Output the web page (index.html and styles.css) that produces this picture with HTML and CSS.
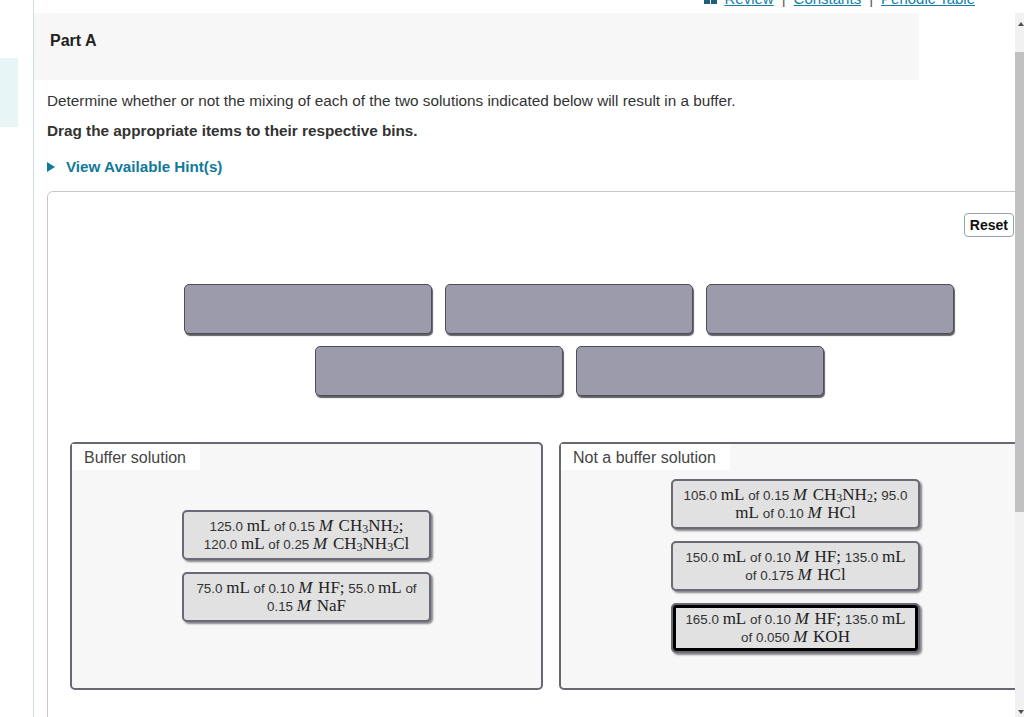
FILE: index.html
```html
<!DOCTYPE html>
<html>
<head>
<meta charset="utf-8">
<link rel="stylesheet" href="styles.css">
</head>
<body>
<div class="page">
  <div class="side"><div class="side-tab"></div></div>
  <div class="main">
    <div class="toplinks">
      <div class="links">
        <svg class="book" width="13" height="12" viewBox="0 0 13 12"><rect x="0" y="1" width="6" height="10" fill="#1f5f78"/><rect x="7" y="1" width="6" height="10" fill="#1f5f78"/></svg>
        <a class="lnk">Review</a><span class="sep">|</span><a class="lnk">Constants</a><span class="sep">|</span><a class="lnk">Periodic Table</a>
      </div>
    </div>
    <div class="part-head">Part A</div>
    <div class="content">
      <p class="intro">Determine whether or not the mixing of each of the two solutions indicated below will result in a buffer.</p>
      <p class="instr">Drag the appropriate items to their respective bins.</p>
      <div class="hint"><span class="tri"></span>View Available Hint(s)</div>
      <div class="area">
        <div class="toolbar"><button class="reset">Reset</button></div>
        <div class="slots">
          <div class="slot"></div><div class="slot"></div><div class="slot"></div>
          <div class="slot"></div><div class="slot"></div>
        </div>
        <div class="bins">
          <div class="bin">
            <div class="bin-label">Buffer solution</div>
            <div class="item">125.0 <span class="m">mL</span> of 0.15 <i class="m mi">M</i> <span class="m">CH<sub>3</sub>NH<sub>2</sub>;</span><br>120.0 <span class="m">mL</span> of 0.25 <i class="m mi">M</i> <span class="m">CH<sub>3</sub>NH<sub>3</sub>Cl</span></div>
            <div class="item">75.0 <span class="m">mL</span> of 0.10 <i class="m mi">M</i> <span class="m">HF;</span> 55.0 <span class="m">mL</span> of<br>0.15 <i class="m mi">M</i> <span class="m">NaF</span></div>
          </div>
          <div class="bin">
            <div class="bin-label">Not a buffer solution</div>
            <div class="item">105.0 <span class="m">mL</span> of 0.15 <i class="m mi">M</i> <span class="m">CH<sub>3</sub>NH<sub>2</sub>;</span> 95.0<br><span class="m">mL</span> of 0.10 <i class="m mi">M</i> <span class="m">HCl</span></div>
            <div class="item">150.0 <span class="m">mL</span> of 0.10 <i class="m mi">M</i> <span class="m">HF;</span> 135.0 <span class="m">mL</span><br>of 0.175 <i class="m mi">M</i> <span class="m">HCl</span></div>
            <div class="item focused">165.0 <span class="m">mL</span> of 0.10 <i class="m mi">M</i> <span class="m">HF;</span> 135.0 <span class="m">mL</span><br>of 0.050 <i class="m mi">M</i> <span class="m">KOH</span></div>
          </div>
        </div>
      </div>
    </div>
  </div>
</div>
<div class="scrollbar">
  <div class="arrow up"></div>
  <div class="thumb"></div>
  <div class="arrow down"></div>
</div>
</body>
</html>
```

FILE: styles.css
```css
html, body {
  margin: 0;
  padding: 0;
  height: 717px;
  overflow: hidden;
  background: #fff;
}
body {
  font-family: "Liberation Sans", Arial, sans-serif;
  color: #333;
  position: relative;
}
.page {
  display: flex;
  height: 717px;
}
.side {
  width: 33px;
  flex: none;
  border-right: 1px solid #cfdbe2;
  padding-top: 58px;
  box-sizing: content-box;
}
.side-tab {
  width: 18px;
  height: 69px;
  background: #e7f5f7;
}
.main {
  flex: 1;
  min-width: 0;
  overflow: hidden;
}
.toplinks {
  height: 13px;
  overflow: hidden;
  display: flex;
  justify-content: flex-end;
  padding-right: 49px;
}
.links {
  margin-top: -10px;
  display: flex;
  align-items: center;
  font-size: 15px;
  line-height: 17px;
  height: 17px;
}
.book {
  margin-right: 8px;
}
.lnk {
  color: #147fa6;
  text-decoration: underline;
}
.sep {
  color: #555;
  margin: 0 8px;
}
.part-head {
  width: 885px;
  height: 67px;
  box-sizing: border-box;
  background: #f7f7f7;
  padding: 19px 16px 0;
  font-weight: bold;
  font-size: 16px;
  line-height: 18px;
  color: #222;
}
.content {
  padding-left: 13px;
}
.intro {
  margin: 12px 0 0;
  font-size: 15.3px;
  line-height: 18px;
}
.instr {
  margin: 12px 0 0;
  font-size: 15.3px;
  line-height: 18px;
  font-weight: bold;
}
.hint {
  margin-top: 18px;
  display: flex;
  align-items: center;
  font-size: 15.2px;
  line-height: 18px;
  font-weight: bold;
  color: #0f7a9b;
}
.tri {
  width: 0;
  height: 0;
  border-top: 5.5px solid transparent;
  border-bottom: 5.5px solid transparent;
  border-left: 8px solid #0f7a9b;
  margin-right: 11px;
}
.area {
  margin-top: 15px;
  width: 1010px;
  border: 1px solid #c6c6c6;
  border-radius: 6px;
  padding: 21px 24px 40px 22px;
  box-sizing: border-box;
}
.toolbar {
  display: flex;
  justify-content: flex-end;
  margin-right: 18px;
}
.reset {
  height: 24px;
  padding: 0 5px;
  background: #fff;
  border: 1px solid #93a5aa;
  border-radius: 4px;
  font-family: "Liberation Sans", Arial, sans-serif;
  font-size: 14px;
  font-weight: bold;
  color: #111;
}
.slots {
  margin: 47px 0 0 99px;
  width: 800px;
  display: flex;
  flex-wrap: wrap;
  justify-content: center;
  gap: 12px 13px;
}
.slot {
  width: 248px;
  height: 50px;
  box-sizing: border-box;
  background: #9c9bab;
  border: 1px solid #4e4e58;
  border-radius: 5px;
  box-shadow: 1px 2px 1px rgba(40, 40, 50, 0.75);
}
.bins {
  display: flex;
  gap: 16px;
  margin-top: 46px;
}
.bin {
  position: relative;
  width: 473px;
  height: 248px;
  box-sizing: border-box;
  border: 2px solid #686872;
  border-radius: 5px;
  background: #f7f7f7;
  display: flex;
  flex-direction: column;
  justify-content: center;
  align-items: center;
  gap: 12px;
}
.bin-label {
  position: absolute;
  left: 0;
  top: 0;
  background: #fff;
  padding: 4px 14px 3px 12px;
  font-size: 16px;
  line-height: 19px;
  color: #444;
}
.item {
  width: 249px;
  box-sizing: border-box;
  background: #e1e1e1;
  border: 2px solid #6a6a76;
  border-radius: 5px;
  box-shadow: 2px 2px 2px rgba(40, 40, 50, 0.55);
  padding: 5px 4px;
  text-align: center;
  font-size: 13.4px;
  line-height: 17px;
  color: #333;
}
.item.focused {
  outline: 3px solid #000;
  outline-offset: -5px;
}
.m {
  font-family: "Liberation Serif", "Times New Roman", serif;
  font-size: 17px;
  line-height: 17px;
  color: #222;
}
.mi {
  font-style: italic;
  margin-right: 2px;
}
.m sub {
  font-size: 12px;
  line-height: 0;
  vertical-align: -2px;
}
.scrollbar {
  position: absolute;
  top: 13px;
  right: 0;
  width: 9px;
  bottom: 0;
  background: #f1f1f1;
}
.thumb {
  position: absolute;
  top: 39px;
  left: 0;
  right: 0;
  height: 460px;
  background: #c1c1c1;
}
.arrow {
  position: absolute;
  left: 3px;
  width: 0;
  height: 0;
  border-left: 3px solid transparent;
  border-right: 3px solid transparent;
}
.arrow.up {
  top: 9px;
  border-bottom: 4px solid #505050;
}
.arrow.down {
  bottom: 3px;
  border-top: 4px solid #505050;
}
```
